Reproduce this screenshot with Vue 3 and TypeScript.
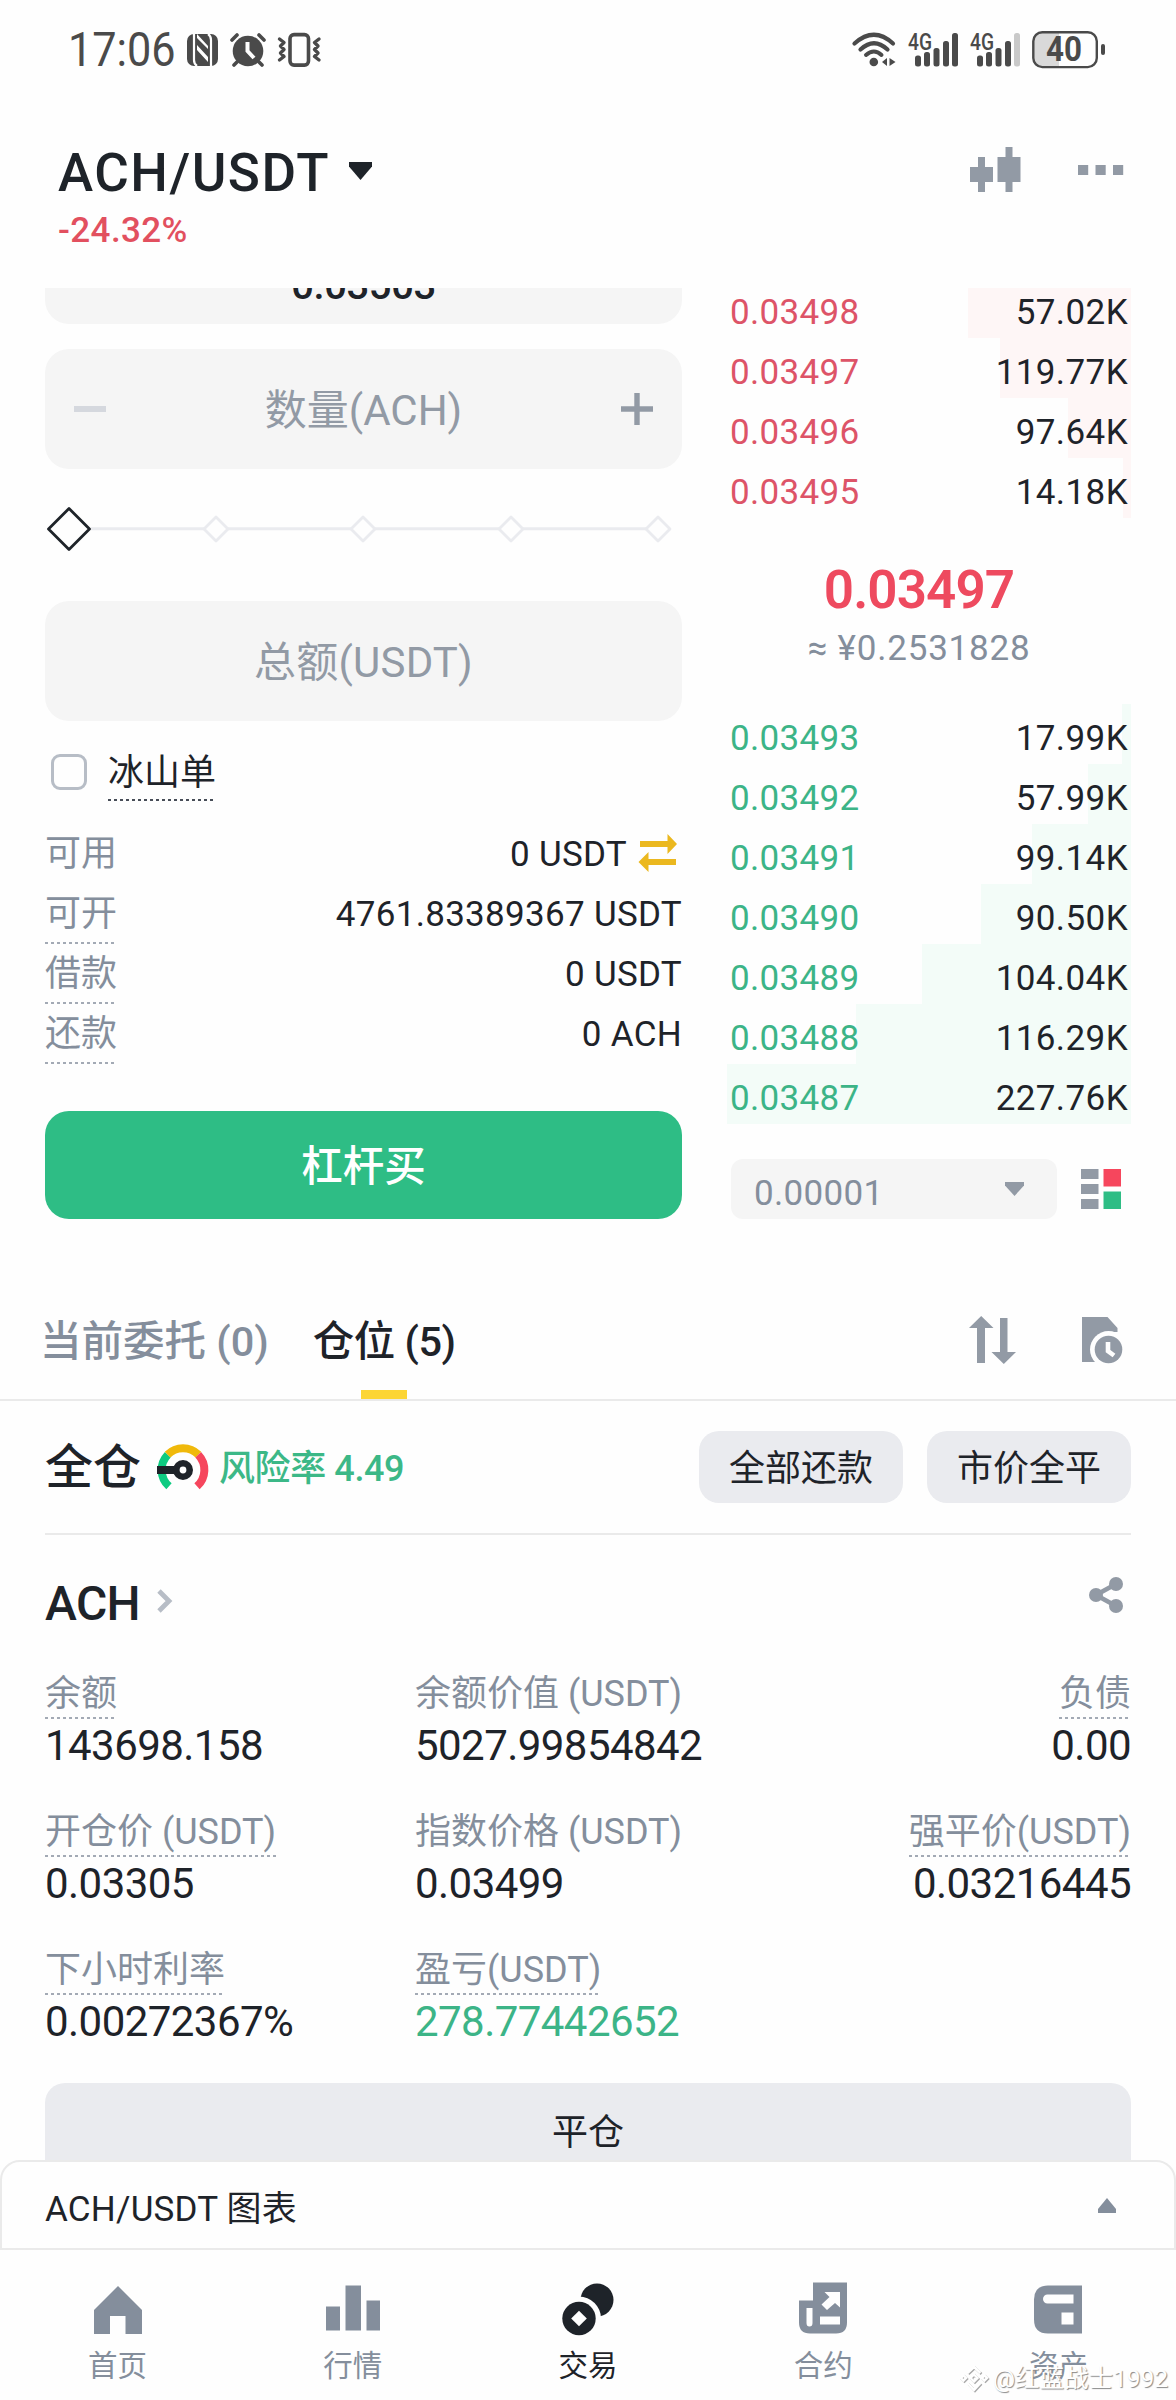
<script setup lang="ts">
interface BookRow {
  price: string
  amount: string
  depth: number
}

interface Stat {
  label: string
  value: string
  hint: boolean
  tone?: 'up'
}

const asks: BookRow[] = [
  { price: '0.03498', amount: '57.02K', depth: 163 },
  { price: '0.03497', amount: '119.77K', depth: 131 },
  { price: '0.03496', amount: '97.64K', depth: 63 },
  { price: '0.03495', amount: '14.18K', depth: 8 },
]

const bids: BookRow[] = [
  { price: '0.03493', amount: '17.99K', depth: 9 },
  { price: '0.03492', amount: '57.99K', depth: 43 },
  { price: '0.03491', amount: '99.14K', depth: 99 },
  { price: '0.03490', amount: '90.50K', depth: 150 },
  { price: '0.03489', amount: '104.04K', depth: 209 },
  { price: '0.03488', amount: '116.29K', depth: 275 },
  { price: '0.03487', amount: '227.76K', depth: 404 },
]

const balances = [
  { label: '可用', value: '0 USDT', hint: false, transfer: true },
  { label: '可开', value: '4761.83389367 USDT', hint: true, transfer: false },
  { label: '借款', value: '0 USDT', hint: true, transfer: false },
  { label: '还款', value: '0 ACH', hint: true, transfer: false },
]

const stats: Stat[] = [
  { label: '余额', value: '143698.158', hint: true },
  { label: '余额价值 (USDT)', value: '5027.99854842', hint: false },
  { label: '负债', value: '0.00', hint: true },
  { label: '开仓价 (USDT)', value: '0.03305', hint: true },
  { label: '指数价格 (USDT)', value: '0.03499', hint: false },
  { label: '强平价(USDT)', value: '0.03216445', hint: true },
  { label: '下小时利率', value: '0.00272367%', hint: true },
  { label: '盈亏(USDT)', value: '278.77442652', hint: true, tone: 'up' },
]

const sliderStops = [171, 318, 466, 613]
</script>

<template>
  <div class="screen">
    <header class="status">
      <span class="clock">17:06</span>
      <svg class="nfc" width="31" height="32" viewBox="0 0 31 32">
        <rect x="0" y="0" width="31" height="32" rx="7" fill="#4a4a4a" />
        <path d="M7 0V26Q7 30 10 32M24 32V6Q24 2 21 0" fill="none" stroke="#fefefe" stroke-width="2.2" />
        <path d="M10 4L21 15V12L10 0ZM10 16L21 28V23L10 11Z" fill="#fefefe" />
      </svg>
      <svg class="alarm" width="36" height="34" viewBox="0 0 36 34">
        <circle cx="18" cy="18" r="15.3" fill="#4a4a4a" />
        <path d="M2 7L7 2M34 7L29 2M7 29L4 32M29 29L32 32" stroke="#4a4a4a" stroke-width="3.6" stroke-linecap="round" />
        <path d="M17.5 9V18L24 25" fill="none" stroke="#fefefe" stroke-width="4" />
      </svg>
      <svg class="vibrate" width="43" height="34" viewBox="0 0 43 34" fill="none" stroke="#4a4a4a">
        <rect x="12" y="1.6" width="18.5" height="30.5" rx="4" stroke-width="3.6" />
        <path d="M1.5 6L6 9.5L2.5 13L6 16.5L2.5 20L6 23.5L1.5 27M41 6L36.5 9.5L40 13L36.5 16.5L40 20L36.5 23.5L41 27" stroke-width="3.4" stroke-linecap="round" stroke-linejoin="round" />
      </svg>
      <span class="grow"></span>
      <svg class="wifi" width="46" height="34" viewBox="0 0 46 34" fill="none" stroke="#4a4a4a" stroke-linecap="round">
        <path d="M2.5 10.5Q22 -7 41 10.5" stroke-width="4.2" />
        <path d="M8.5 16.5Q22 4 35.5 16.5" stroke-width="4.2" />
        <path d="M14 22Q22 15 29.5 22" stroke-width="4" />
        <circle cx="21.8" cy="29" r="4.3" fill="#4a4a4a" stroke="none" />
        <path d="M35 25V33L30 29ZM37.5 33V25L43.5 29Z" fill="#4a4a4a" stroke="none" />
      </svg>
      <svg class="signal" width="50" height="34" viewBox="0 0 50 34">
        <text x="0" y="16.5" textLength="24" lengthAdjust="spacingAndGlyphs" class="net">4G</text>
        <g fill="#4a4a4a">
          <rect x="7" y="22.5" width="6" height="11" rx="2.5" />
          <rect x="16" y="19" width="6" height="14.5" rx="2.5" />
          <rect x="25.5" y="15" width="6" height="18.5" rx="2.5" />
          <rect x="35" y="8" width="6" height="25.5" rx="2.5" />
          <rect x="44" y="0" width="6" height="33.5" rx="2.5" />
        </g>
      </svg>
      <svg class="signal second" width="50" height="34" viewBox="0 0 50 34">
        <text x="0" y="16.5" textLength="24" lengthAdjust="spacingAndGlyphs" class="net">4G</text>
        <g fill="#4a4a4a">
          <rect x="7" y="22.5" width="6" height="11" rx="2.5" />
          <rect x="16" y="19" width="6" height="14.5" rx="2.5" />
          <rect x="25.5" y="15" width="6" height="18.5" rx="2.5" />
          <rect x="35" y="8" width="6" height="25.5" rx="2.5" />
          <rect x="44" y="0" width="6" height="33.5" rx="2.5" fill="#c9c9c9" />
        </g>
      </svg>
      <svg class="battery" width="74" height="38" viewBox="0 0 74 38">
        <path d="M10 2H27V36H10Q2 36 2 28V10Q2 2 10 2Z" fill="#d9d9d9" />
        <rect x="1.3" y="1.3" width="63.5" height="34.8" rx="9" fill="none" stroke="#4a4a4a" stroke-width="2.4" />
        <rect x="69" y="13" width="4" height="11" rx="2" fill="#4a4a4a" />
        <text x="14" y="29.5" textLength="36" lengthAdjust="spacingAndGlyphs" class="level">40</text>
      </svg>
    </header>

    <section class="pair">
      <div>
        <div class="pair-name">
          <h1>ACH/USDT</h1>
          <svg width="23" height="18" viewBox="0 0 23 18"><path d="M0 0H23V4.5L11.5 18L0 4.5Z" fill="#1e2329" /></svg>
        </div>
        <div class="change">-24.32%</div>
      </div>
      <div class="pair-tools">
        <svg width="51" height="46" viewBox="0 0 51 46" fill="#929aa5">
          <path d="M8 10H15V20H23V35H15V45H8V35H0V20H8Z" />
          <path d="M35.5 0H42.5V10H50.5V35H42.5V45H35.5V35H27.5V10H35.5Z" />
        </svg>
        <svg width="46" height="10" viewBox="0 0 46 10" fill="#929aa5">
          <rect x="0" width="10.2" height="10" /><rect x="17.5" width="10.2" height="10" /><rect x="35" width="10.2" height="10" />
        </svg>
      </div>
    </section>

    <main class="content">
      <div class="trade">
        <div class="form">
          <div class="field price-field"><span>0.03503</span></div>
          <div class="field amount-field">
            <svg width="32" height="32" viewBox="0 0 32 32"><rect y="13" width="32" height="6" fill="#d5d8de" /></svg>
            <span class="ph">数量(ACH)</span>
            <svg width="32" height="32" viewBox="0 0 32 32"><path d="M13.3 0H18.7V13.3H32V18.7H18.7V32H13.3V18.7H0V13.3H13.3Z" fill="#929aa5" /></svg>
          </div>
          <svg class="slider" width="637" height="52" viewBox="0 0 637 52">
            <path d="M46 25.8H613" stroke="#eaebef" stroke-width="3" />
            <path v-for="x in sliderStops" :key="x" :d="`M${x} 14L${x + 12} 26L${x} 38L${x - 12} 26Z`" fill="#fefefe" stroke="#eaebef" stroke-width="2.8" stroke-linejoin="round" />
            <path d="M24 5.5L44.5 26L24 46.5L3.5 26Z" fill="#fefefe" stroke="#1e2329" stroke-width="2.8" stroke-linejoin="round" />
          </svg>
          <div class="field total-field"><span class="ph">总额(USDT)</span></div>
          <div class="iceberg">
            <i class="box"></i>
            <span class="dotted dark">冰山单</span>
          </div>
          <div v-for="b in balances" :key="b.label" class="balance">
            <span class="name" :class="{ dotted: b.hint }">{{ b.label }}</span>
            <span class="sum">{{ b.value }}</span>
            <svg v-if="b.transfer" class="swap" width="40" height="38" viewBox="0 0 40 38" fill="#ebb81f">
              <path d="M2 7H29.5V0L39 10L29.5 20V13H2ZM38 25H10.5V18L0.5 28L10.5 38V31H38Z" />
            </svg>
          </div>
          <button class="buy">杠杆买</button>
        </div>

        <div class="book">
          <div class="asks">
            <div v-for="r in asks" :key="r.price" class="row ask">
              <i class="depth" :style="{ width: r.depth + 'px' }"></i>
              <span class="p">{{ r.price }}</span><span class="a">{{ r.amount }}</span>
            </div>
          </div>
          <div class="last">
            <strong>0.03497</strong>
            <span>≈ ¥0.2531828</span>
          </div>
          <div v-for="r in bids" :key="r.price" class="row bid">
            <i class="depth" :style="{ width: r.depth + 'px' }"></i>
            <span class="p">{{ r.price }}</span><span class="a">{{ r.amount }}</span>
          </div>
          <div class="precision">
            <div class="select">
              <span>0.00001</span>
              <svg width="19" height="14" viewBox="0 0 19 14"><path d="M0 0H19V3.5L9.5 14L0 3.5Z" fill="#929aa5" /></svg>
            </div>
            <svg width="40" height="40" viewBox="0 0 40 40">
              <path d="M0 0H17.5V10H0ZM0 15H17.5V25H0ZM0 30H17.5V40H0Z" fill="#929aa5" />
              <rect x="22.5" width="17.5" height="17.5" fill="#f6465d" />
              <rect x="22.5" y="22.5" width="17.5" height="17.5" fill="#2ebd85" />
            </svg>
          </div>
        </div>
      </div>

      <nav class="tabs">
        <span class="tab">当前委托 (0)</span>
        <span class="tab active">仓位 (5)</span>
        <span class="grow"></span>
        <svg class="sort" width="47" height="48" viewBox="0 0 47 48" fill="#929aa5">
          <path d="M12.2 0L24.5 12H16V47H8V12H0ZM31 2H38.5V36H47L34.8 48L22.5 36H31Z" />
        </svg>
        <svg class="history" width="41" height="48" viewBox="0 0 41 48">
          <path d="M0 1H25.5L35.5 12V16H0ZM0 15H30V46H0Z" fill="#929aa5" />
          <circle cx="26.5" cy="33.5" r="18.5" fill="#fefefe" />
          <circle cx="26.5" cy="33.5" r="13.8" fill="#929aa5" />
          <path d="M26 26V35L32 39.5" fill="none" stroke="#fefefe" stroke-width="4.6" />
        </svg>
      </nav>

      <section class="account">
        <h2>全仓</h2>
        <svg class="gauge" width="52" height="46" viewBox="0 0 52 46" fill="none" stroke-width="8">
          <path d="M12 42.3A21.8 21.8 0 0 1 10.8 10.8" stroke="#0ecb81" />
          <path d="M10.6 10.6A21.8 21.8 0 0 1 41.4 10.6" stroke="#f0b90b" />
          <path d="M41.2 10.8A21.8 21.8 0 0 1 40 42.3" stroke="#f6465d" />
          <path d="M0 26H20" stroke="#1e2329" />
          <circle cx="26" cy="26" r="6.7" stroke="#1e2329" stroke-width="6.6" />
        </svg>
        <span class="risk">风险率 4.49</span>
        <span class="grow"></span>
        <button>全部还款</button>
        <button>市价全平</button>
      </section>

      <section class="asset">
        <div class="asset-head">
          <h3>ACH</h3>
          <svg width="15" height="24" viewBox="0 0 15 24"><path d="M2 2L12 12L2 22" fill="none" stroke="#b7bdc6" stroke-width="4.8" /></svg>
          <span class="grow"></span>
          <svg class="share" width="34" height="36" viewBox="0 0 34 36">
            <path d="M27 7L7 18L27 29" fill="none" stroke="#929aa5" stroke-width="4.6" />
            <g fill="#929aa5"><circle cx="7" cy="18" r="7" /><circle cx="27" cy="7" r="7" /><circle cx="27" cy="29" r="7" /></g>
          </svg>
        </div>
        <div class="stats">
          <div v-for="s in stats" :key="s.label" class="stat">
            <span class="label" :class="{ dotted: s.hint }">{{ s.label }}</span>
            <span class="value" :class="s.tone">{{ s.value }}</span>
          </div>
        </div>
        <button class="close">平仓</button>
      </section>
    </main>

    <section class="chart">
      <span>ACH/USDT 图表</span>
      <svg width="18" height="15" viewBox="0 0 18 15"><path d="M9 0L18 11V15H0V11Z" fill="#848e9c" /></svg>
    </section>

    <footer class="nav">
      <div class="item">
        <svg width="54" height="54" viewBox="0 0 54 54" fill="#848e9c"><path d="M27 4L51 28V52H34.5V34H19V52H3V28Z" /></svg>
        <span>首页</span>
      </div>
      <div class="item">
        <svg width="54" height="54" viewBox="0 0 54 54" fill="#848e9c"><path d="M0 24.5H14V48.5H0ZM19.5 3.5H35V48.5H19.5ZM40.5 18.5H54V48.5H40.5Z" /></svg>
        <span>行情</span>
      </div>
      <div class="item on">
        <svg width="54" height="54" viewBox="0 0 54 54">
          <circle cx="36" cy="18" r="16.5" fill="#1e2329" />
          <circle cx="18" cy="36.5" r="22" fill="#fefefe" />
          <circle cx="18" cy="36.5" r="16.7" fill="#1e2329" />
          <path d="M18 28.7L25.8 36.5L18 44.3L10.2 36.5Z" fill="#fefefe" />
        </svg>
        <span>交易</span>
      </div>
      <div class="item">
        <svg width="54" height="54" viewBox="0 0 54 54">
          <path d="M17 0.5H51V40.5Q51 51.5 40 51.5H14Q3 51.5 3 40.5V18.5H17Z" fill="#848e9c" />
          <path d="M10.5 26H16.5V41Q16.5 44.5 13.5 44.5Q10.5 44.5 10.5 41ZM24 34.5H44V42.5H24ZM28.5 10H44V25.5L39 21L31 28L25.5 22.5L33.5 15Z" fill="#fefefe" />
        </svg>
        <span>合约</span>
      </div>
      <div class="item">
        <svg width="54" height="54" viewBox="0 0 54 54">
          <path d="M17 3.5H51V51.5H17Q3 51.5 3 37.5V17.5Q3 3.5 17 3.5Z" fill="#848e9c" />
          <path d="M16.5 12.5H42.5V21.5H16.5A4.5 4.5 0 0 1 16.5 12.5ZM30.5 30.5H42.5V42.5H30.5Z" fill="#fefefe" />
        </svg>
        <span>资产</span>
      </div>
      <div class="mark">
        <svg width="28" height="26" viewBox="0 0 28 26" fill="none" stroke-width="2.4">
          <g stroke="#a8a8a8" transform="translate(1 1)"><path d="M7.5 7L14 1L20.5 7M7.5 17L14 24L20.5 17M14 8.5L17.5 12L14 15.5L10.5 12ZM1 12L3.5 9.5L6 12L3.5 14.5ZM22 12L24.5 9.5L27 12L24.5 14.5Z" /></g>
          <g stroke="#fff"><path d="M7.5 7L14 1L20.5 7M7.5 17L14 24L20.5 17M14 8.5L17.5 12L14 15.5L10.5 12ZM1 12L3.5 9.5L6 12L3.5 14.5ZM22 12L24.5 9.5L27 12L24.5 14.5Z" /></g>
        </svg>
        <span>@红蓝战士1992</span>
      </div>
    </footer>
  </div>
</template>

<style>
body {
  margin: 0;
  background: #fefefe;
}
</style>

<style scoped>
* {
  box-sizing: border-box;
}
.screen {
  display: flex;
  flex-direction: column;
  width: 1176px;
  height: 2400px;
  overflow: hidden;
  background: #fefefe;
  color: #1e2329;
  font-family: Roboto, 'Noto Sans CJK SC', sans-serif;
  font-size: 35px;
  white-space: nowrap;
}
svg {
  display: block;
  flex: none;
  overflow: visible;
}
h1,
h2,
h3 {
  margin: 0;
  font-weight: 500;
}
button {
  border: 0;
  padding: 0 0 4px;
  font-family: inherit;
  color: inherit;
}
.grow {
  flex: 1;
}

.status {
  display: flex;
  align-items: center;
  height: 98px;
  padding: 1px 70px 0 68px;
}
.clock {
  width: 119px;
  font-size: 48px;
  color: #4a4a4a;
  transform: scaleX(0.9);
  transform-origin: 0 50%;
}
.alarm {
  margin-left: 12px;
}
.vibrate {
  margin-left: 12px;
}
.signal {
  margin-left: 10px;
}
.signal.second {
  margin-left: 12px;
}
.net {
  font-size: 23px;
  font-weight: 500;
  fill: #4a4a4a;
}
.battery {
  margin-left: 12px;
}
.level {
  font-size: 35px;
  font-weight: 700;
  fill: #4a4a4a;
}

.pair {
  display: flex;
  justify-content: space-between;
  height: 190px;
  padding: 43px 52px 0 58px;
}
.pair-name {
  display: flex;
  align-items: center;
  gap: 19px;
  height: 60px;
}
h1 {
  padding-top: 3px;
  font-size: 53px;
  line-height: 60px;
  letter-spacing: 1.5px;
}
.change {
  margin-top: 7px;
  font-weight: 500;
  line-height: 46px;
  letter-spacing: 0.4px;
  color: #e2505f;
}
.pair-tools {
  display: flex;
  align-items: center;
  gap: 57px;
  height: 57px;
}

.content {
  height: 1872px;
  overflow: hidden;
}
.trade {
  display: flex;
  justify-content: space-between;
  padding: 0 45px;
}
.form {
  width: 637px;
}
.field {
  display: flex;
  align-items: center;
  justify-content: center;
  height: 120px;
  border-radius: 24px;
  background: #f5f5f5;
}
.price-field {
  height: 36px;
  align-items: flex-start;
  overflow: hidden;
  border-radius: 0 0 24px 24px;
  font-size: 40px;
  font-weight: 500;
  line-height: 40px;
  letter-spacing: -0.4px;
}
.price-field span {
  margin-top: -22px;
}
.amount-field {
  justify-content: space-between;
  margin-top: 25px;
  padding: 0 29px;
}
.ph {
  padding-top: 3px;
  font-size: 42px;
  line-height: 60px;
  color: #929aa5;
}
.slider {
  margin-top: 34px;
  margin-bottom: 46px;
}
.total-field .ph {
  letter-spacing: 0.2px;
}
.iceberg {
  display: flex;
  align-items: center;
  height: 36px;
  margin: 33px 0;
  padding-left: 6px;
}
.box {
  width: 36px;
  height: 36px;
  margin-right: 21px;
  border: 3px solid #b7bdc6;
  border-radius: 9px;
}
.iceberg span {
  height: 58px;
  font-size: 36px;
  line-height: 60px;
}
.dotted {
  background: repeating-linear-gradient(90deg, #a3aab5 0 3px, transparent 3px 6px) 0 100% / 100% 2px no-repeat;
}
.dotted.dark {
  background-image: repeating-linear-gradient(90deg, #474d57 0 3px, transparent 3px 6px);
}
.balance {
  display: flex;
  align-items: center;
  height: 60px;
}
.name {
  height: 62px;
  margin-right: auto;
  font-size: 36px;
  line-height: 64px;
  color: #848e9c;
}
.sum {
  padding-top: 2px;
  letter-spacing: 0.3px;
}
.swap {
  margin-left: 11px;
  margin-right: 4px;
}
.buy {
  display: block;
  width: 637px;
  height: 108px;
  margin-top: 48px;
  border-radius: 24px;
  background: #2ebd85;
  color: #fff;
  font-size: 41.5px;
  font-weight: 500;
}

.book {
  width: 404px;
}
.asks {
  height: 230px;
  overflow: hidden;
  display: flex;
  flex-direction: column;
  justify-content: flex-end;
}
.row {
  position: relative;
  display: flex;
  flex: none;
  justify-content: space-between;
  height: 60px;
  padding: 6px 3px 0 3px;
  line-height: 57px;
  letter-spacing: 0.4px;
}
.depth {
  position: absolute;
  top: 0;
  right: 0;
  height: 60px;
  background: #fef6f6;
}
.bid .depth {
  background: #f3fcf8;
}
.p,
.a {
  position: relative;
}
.p {
  letter-spacing: 0.3px;
}
.ask .p {
  color: #dd5468;
}
.bid .p {
  color: #3cb487;
}
.last {
  display: flex;
  flex-direction: column;
  align-items: center;
  height: 186px;
  padding-top: 42px;
  padding-right: 20px;
}
.last strong {
  font-size: 53px;
  font-weight: 600;
  line-height: 60px;
  letter-spacing: -0.9px;
  color: #ee4a5f;
}
.last span {
  margin-top: 3px;
  line-height: 52px;
  letter-spacing: 0.8px;
  color: #848e9c;
}
.precision {
  display: flex;
  align-items: center;
  justify-content: space-between;
  margin-top: 35px;
  padding-left: 4px;
  padding-right: 10px;
}
.select {
  display: flex;
  align-items: center;
  justify-content: space-between;
  width: 326px;
  height: 60px;
  padding: 0 33px 0 23px;
  border-radius: 12px;
  background: #f5f5f5;
  color: #848e9c;
}
.select span {
  padding-top: 8px;
  letter-spacing: 0.3px;
}

.tabs {
  display: flex;
  align-items: center;
  height: 117px;
  margin-top: 65px;
  padding: 0 53px 0 40px;
  border-bottom: 2px solid #eaeaea;
  font-size: 41.5px;
  font-weight: 500;
}
.tab {
  position: relative;
  line-height: 115px;
  color: #848e9c;
}
.tab.active {
  margin-left: 44px;
  letter-spacing: -0.5px;
  color: #1e2329;
}
.tab.active::after {
  content: '';
  position: absolute;
  left: 50%;
  bottom: 0;
  width: 46px;
  height: 9px;
  margin-left: -23px;
  background: #fcd535;
}
.sort {
  margin-right: 66px;
}
.sort,
.history {
  margin-bottom: 4px;
}

.account {
  display: flex;
  align-items: center;
  height: 134px;
  margin: 0 45px;
  border-bottom: 2px solid #eaeaea;
}
.account h2 {
  padding-top: 2px;
  font-size: 48px;
  line-height: 60px;
}
.gauge {
  margin-left: 16px;
}
.risk {
  margin-left: 10px;
  padding-bottom: 4px;
  font-size: 36px;
  font-weight: 500;
  letter-spacing: -0.4px;
  color: #3cb887;
}
.account button {
  width: 204px;
  height: 72px;
  margin-left: 24px;
  border-radius: 20px;
  background: #eaebef;
  font-size: 36px;
}

.asset {
  padding: 0 45px;
}
.asset-head {
  display: flex;
  align-items: center;
  height: 132px;
}
.asset-head h3 {
  padding-top: 6px;
  font-size: 48px;
  line-height: 60px;
  letter-spacing: -0.6px;
}
.asset-head h3 + svg {
  margin-left: 17px;
}
.share {
  margin: 0 8px 12px 0;
}
.stats {
  display: grid;
  grid-template-columns: 370px 370px 346px;
}
.stat {
  display: flex;
  flex-direction: column;
  align-items: flex-start;
  height: 138px;
}
.stat:nth-child(3n) {
  align-items: flex-end;
}
.label {
  height: 52px;
  font-size: 36px;
  line-height: 54px;
  color: #848e9c;
}
.value {
  font-size: 42px;
  line-height: 53px;
  letter-spacing: -0.55px;
}
.value.up {
  color: #3cb487;
}
.close {
  display: block;
  width: 1086px;
  height: 96px;
  margin-top: 2px;
  border-radius: 20px;
  background: #eaebef;
  font-size: 36px;
}

.chart {
  display: flex;
  flex: none;
  align-items: center;
  justify-content: space-between;
  height: 90px;
  padding: 0 58px 0 43px;
  border: 2px solid #eaeaea;
  border-radius: 20px 20px 0 0;
  letter-spacing: 0.2px;
}

.nav {
  position: relative;
  display: flex;
  height: 150px;
}
.item {
  display: flex;
  flex: 1;
  flex-direction: column;
  align-items: center;
  padding-top: 32px;
  color: #848e9c;
  font-size: 29.5px;
}
.item span {
  margin-top: 10px;
  line-height: 40px;
}
.item.on {
  color: #1e2329;
}
.mark {
  position: absolute;
  right: 8px;
  bottom: 5px;
  display: flex;
  align-items: center;
  gap: 5px;
  color: #fff;
  font-size: 24.5px;
  line-height: 32px;
  text-shadow: 1px 1px 1px #888;
}
</style>
